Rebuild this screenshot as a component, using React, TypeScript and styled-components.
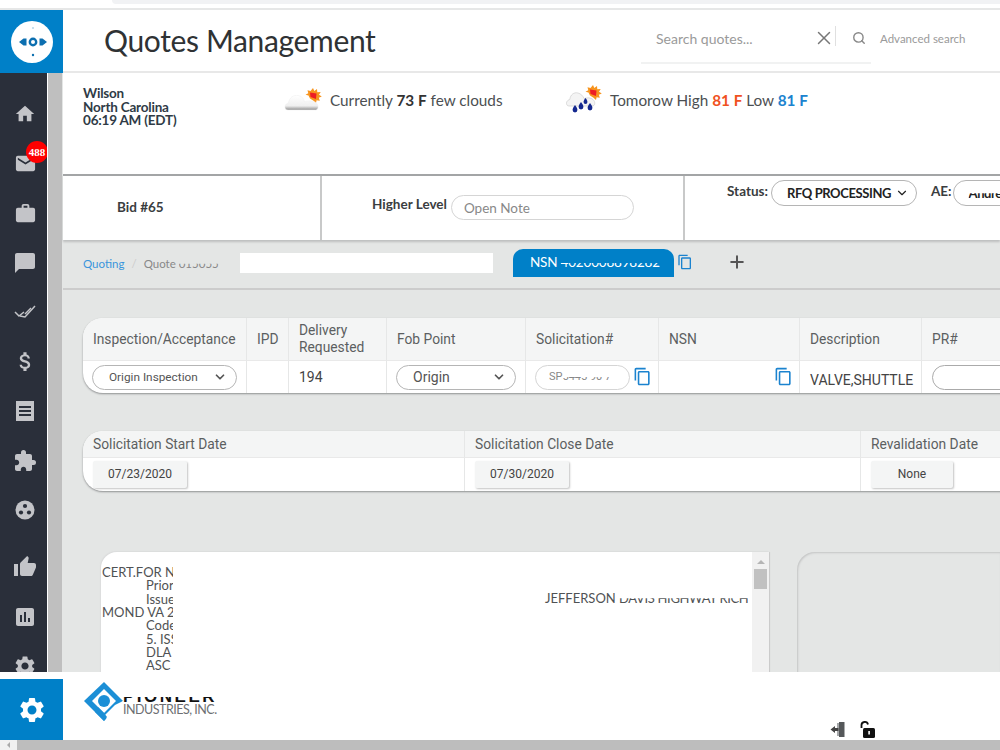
import React from "react";
import styled, { createGlobalStyle } from "styled-components";
import {
  MdHome,
  MdEmail,
  MdWork,
  MdChatBubble,
  MdAttachMoney,
  MdExtension,
  MdThumbUp,
  MdAssessment,
  MdSettings,
  MdContentCopy,
} from "react-icons/md";
import { FiX, FiPlus, FiChevronDown, FiSearch } from "react-icons/fi";

const Global = createGlobalStyle`
  html, body { margin: 0; padding: 0; background: #fff; }
  body { width: 1000px; height: 750px; overflow: hidden; font-family: "Lato", "Open Sans", sans-serif; color: #333; }
  * { box-sizing: border-box; }
`;

const Page = styled.div`
  width: 1000px;
  height: 750px;
  display: flex;
  flex-direction: column;
  overflow: hidden;
  background: #fff;
`;

const TopStrip = styled.div`
  height: 10px;
  flex: none;
  background: #fff;
  border-bottom: 2px solid #e6e7e7;
  padding-left: 112px;
`;

const TopTab = styled.div`
  height: 4px;
  background: #f1f2f4;
  border-bottom-left-radius: 6px;
`;

const Body = styled.div`
  height: 662px;
  flex: none;
  display: flex;
  overflow: hidden;
`;

const Sidebar = styled.aside`
  width: 63px;
  flex: none;
  display: flex;
  flex-direction: column;
`;

const LogoBlock = styled.div`
  height: 63px;
  flex: none;
  background: #0080c8;
  display: flex;
  align-items: center;
  justify-content: center;
`;

const SideBody = styled.div`
  flex: 1;
  display: flex;
  min-height: 0;
`;

const Rail = styled.nav`
  width: 47px;
  flex: none;
  background: #2a2f3a;
  display: flex;
  flex-direction: column;
  padding-top: 16.25px;
  overflow: hidden;
`;

const RailGutter = styled.div`
  width: 16px;
  flex: none;
  border-left: 1px solid #fff;
  background: #bfbfbf;
  border-right: 1px solid #e4e6e5;
`;

const RailItem = styled.div`
  position: relative;
  flex: none;
  width: 50px;
  height: 49.5px;
  display: flex;
  align-items: center;
  justify-content: center;
  color: #c3c4c8;
`;

const RailItemGap = styled(RailItem)`
  margin-top: 7.5px;
`;

const Badge = styled.span`
  position: absolute;
  left: 26px;
  top: 2px;
  width: 22px;
  height: 22px;
  border-radius: 50%;
  background: #ff0000;
  color: #fff;
  font: bold 11px/22px "Liberation Serif", serif;
  text-align: center;
`;

const Content = styled.main`
  flex: 1;
  min-width: 0;
  display: flex;
  flex-direction: column;
  background: #e4e6e5;
`;

const Header = styled.header`
  height: 63px;
  flex: none;
  background: #fff;
  display: flex;
  align-items: center;
  padding-left: 41px;
  border-bottom: 2px solid #e8e8e8;
`;

const Title = styled.h1`
  margin: 0 0 2px;
  width: 537px;
  flex: none;
  font-size: 30px;
  line-height: 40px;
  font-weight: 400;
  color: #2f3234;
  letter-spacing: -0.35px;
  white-space: nowrap;
`;

const SearchBox = styled.div`
  width: 230px;
  height: 47px;
  flex: none;
  margin-bottom: 1px;
  display: flex;
  align-items: center;
  border-bottom: 2px solid #f1f2f2;
  padding: 0 0 2px 15px;
  white-space: nowrap;
`;

const SearchText = styled.span`
  font-size: 14px;
  color: #9a9a9a;
  width: 157px;
  flex: none;
`;

const SearchIcon = styled.span<{ $color: string }>`
  display: flex;
  flex: none;
  color: ${(p) => p.$color};
`;

const SearchDivider = styled.span`
  width: 1px;
  height: 20px;
  flex: none;
  background: #e0e0e0;
  margin: 0 16px 4px 0;
`;

const Advanced = styled.span`
  font-size: 11.5px;
  color: #9a9a9a;
  margin-left: 14px;
  flex: none;
`;

const InfoRow = styled.section`
  height: 101px;
  flex: none;
  background: #fff;
  display: flex;
  align-items: flex-start;
  padding: 14px 0 0 20px;
`;

const Place = styled.div`
  width: 202px;
  flex: none;
  font-size: 13.5px;
  line-height: 13.5px;
  font-weight: 700;
  color: #2f3b46;
  letter-spacing: -0.2px;
`;

const Weather = styled.div<{ $w: number }>`
  width: ${(p) => p.$w}px;
  flex: none;
  display: flex;
  align-items: center;
  gap: 8px;
  font-size: 15.3px;
  color: #4c4f52;
  height: 30px;
  margin-top: -2px;
  white-space: nowrap;
`;

const Hot = styled.b`
  color: #f0521e;
`;
const Cool = styled.b`
  color: #1b83cf;
`;
const Strong = styled.b`
  color: #333;
`;

const BidRow = styled.section`
  height: 66px;
  flex: none;
  background: #fff;
  display: flex;
  border-top: 2px solid #a3a5a6;
  box-shadow: 0 2px 2px #bdbfbf;
  position: relative;
`;

const BidCell = styled.div<{ $w: number }>`
  width: ${(p) => p.$w}px;
  flex: none;
  border-right: 2px solid #c8c9c9;
  display: flex;
  align-items: center;
  font-size: 13.5px;
  font-weight: 700;
  color: #3a3d40;
`;

const BidLabel = styled.span`
  margin: 0 0 2px 54px;
`;

const LevelCell = styled(BidCell)`
  padding: 0 0 0 50px;
  gap: 4px;
`;

const LevelLabel = styled.span`
  margin-bottom: 8px;
`;

const NoteInput = styled.div`
  width: 183px;
  height: 25px;
  margin-bottom: 1px;
  border: 1px solid #d5d5d5;
  border-radius: 13px;
  font-size: 13.5px;
  font-weight: 400;
  color: #888;
  padding: 3px 12px;
  line-height: 18px;
`;

const StatusCell = styled.div`
  flex: 1;
  min-width: 0;
  display: flex;
  align-items: flex-start;
  padding: 4px 0 0 42px;
  font-size: 13.5px;
  font-weight: 700;
  color: #3a3d40;
  overflow: hidden;
  white-space: nowrap;
`;

const StatusLabel = styled.span`
  margin-top: 3px;
`;

const AeLabel = styled(StatusLabel)`
  margin-left: 14px;
`;

const Pill = styled.div<{ $w: number; $ml: number }>`
  width: ${(p) => p.$w}px;
  flex: none;
  height: 26px;
  margin-left: ${(p) => p.$ml}px;
  border: 1px solid #b5b5b5;
  border-radius: 13px;
  display: flex;
  align-items: center;
  padding-left: 15px;
  gap: 4px;
  font-size: 13px;
  letter-spacing: -0.4px;
  color: #222;
`;

const Crumbs = styled.section`
  height: 50px;
  flex: none;
  display: flex;
  align-items: flex-start;
  padding-left: 20px;
  border-bottom: 2px solid #ccc;
`;

const CrumbText = styled.div`
  width: 157px;
  flex: none;
  margin-top: 16px;
  font: 11.5px/15px "Lato", sans-serif;
  color: #888;
  white-space: nowrap;
`;

const CrumbLink = styled.span`
  color: #3a95dc;
`;

const CrumbSep = styled.span`
  color: #ccc;
  margin: 0 7px;
`;

const Halved = styled.span`
  display: inline-block;
  clip-path: inset(52% 0 0 0);
`;

const WhiteBar = styled.div`
  width: 253px;
  height: 20px;
  flex: none;
  margin-top: 13px;
  background: #fff;
`;

const NsnTab = styled.div`
  width: 161px;
  height: 28px;
  flex: none;
  margin: 9px 0 0 20px;
  background: #0080c8;
  border-radius: 10px 10px 0 0;
  color: #fff;
  font-size: 13.5px;
  letter-spacing: -0.2px;
  line-height: 27px;
  padding-left: 17px;
  white-space: nowrap;
`;

const TabCopy = styled.span`
  margin: 14px 0 0 3px;
  color: #1b83cf;
  display: flex;
`;

const TabAdd = styled.span`
  margin: 12px 0 0 34px;
  color: #555;
  display: flex;
`;

const Workspace = styled.section`
  flex: 1;
  min-height: 0;
  display: flex;
  flex-direction: column;
  padding: 28px 0 0 20px;
  overflow: hidden;
`;

const Table = styled.div<{ $cols: string; $head: number; $mb: number }>`
  width: 980px;
  flex: none;
  display: grid;
  grid-template-columns: ${(p) => p.$cols};
  grid-template-rows: ${(p) => p.$head}px auto;
  margin-bottom: ${(p) => p.$mb}px;
  border-radius: 20px 0 0 20px;
  overflow: hidden;
  background: #fff;
  box-shadow: 0 1px 2px #8f9192;
  font-family: "Roboto", sans-serif;
`;

const HeadCell = styled.div`
  background: #f4f5f5;
  color: #5c5f61;
  font-size: 13.8px;
  line-height: 17px;
  display: flex;
  align-items: center;
  padding-left: 10px;
  border-right: 1px solid #e6e7e7;
  border-bottom: 1px solid #e9e9e9;
  white-space: nowrap;
`;

const BodyCell = styled.div<{ $h: number }>`
  height: ${(p) => p.$h}px;
  color: #444;
  font-size: 14px;
  display: flex;
  align-items: center;
  padding-left: 10px;
  border-right: 1px solid #e6e7e7;
  white-space: nowrap;
  overflow: hidden;
  position: relative;
`;

const SelectPill = styled.div<{ $w: number; $fs: number; $pl: number }>`
  width: ${(p) => p.$w}px;
  height: 25px;
  flex: none;
  margin-left: -1px;
  border: 1px solid #b5b5b5;
  border-radius: 13px;
  display: flex;
  align-items: center;
  justify-content: space-between;
  padding: 0 9px 0 ${(p) => p.$pl}px;
  font-size: ${(p) => p.$fs}px;
  color: #555;
`;

const SolInput = styled.div`
  width: 95px;
  height: 25px;
  flex: none;
  margin-left: -1px;
  border: 1px solid #d5d5d5;
  border-radius: 13px;
  padding-left: 13px;
  font-size: 11px;
  line-height: 22px;
  color: #888;
`;

const CopyBtn = styled.span`
  display: flex;
  color: #1b83cf;
  position: absolute;
  top: 6px;
  right: 6px;
`;

const DescText = styled.span`
  padding-top: 6px;
`;

const PrInput = styled.div`
  width: 90px;
  height: 25px;
  flex: none;
  border: 1px solid #aaa;
  border-radius: 13px;
`;

const DateChip = styled.div<{ $w: number }>`
  width: ${(p) => p.$w}px;
  height: 27px;
  flex: none;
  background: #f4f5f5;
  border-radius: 2px;
  box-shadow: 1px 1px 2px #c4c4c4;
  font-size: 12px;
  color: #444;
  text-align: center;
  line-height: 27px;
`;

const Panels = styled.div`
  flex: 1;
  min-height: 0;
  display: flex;
  padding: 61px 0 0 18px;
`;

const NotePanel = styled.div`
  width: 668px;
  height: 130px;
  flex: none;
  background: #fff;
  border-radius: 16px 0 0 0;
  box-shadow: -1px -1px 1px #dcdddd, 1px 0 1px #c8c8c8;
  display: flex;
  position: relative;
  overflow: hidden;
`;

const NoteClip = styled.div`
  width: 72px;
  flex: none;
  overflow: hidden;
  padding-top: 14px;
  padding-left: 1px;
  font-size: 13px;
  line-height: 13.35px;
  color: #4f5254;
  white-space: nowrap;
`;

const NoteLine = styled.div<{ $indent?: boolean }>`
  padding-left: ${(p) => (p.$indent ? 44 : 0)}px;
`;

const NoteRight = styled.div`
  flex: 1;
  padding: 38px 0 0 372px;
  font-size: 13px;
  line-height: 16px;
  color: #4f5254;
  white-space: nowrap;
  overflow: hidden;
`;

const NoteRedacted = styled(Halved)`
  letter-spacing: -0.35px;
`;

const ScrollTrack = styled.div`
  width: 17px;
  flex: none;
  background: #f1f1f1;
  display: flex;
  flex-direction: column;
  align-items: center;
  padding-top: 8px;
`;

const ScrollArrow = styled.span`
  width: 0;
  height: 0;
  border: 4px solid transparent;
  border-top: 0;
  border-bottom: 4px solid #b5b5b5;
`;

const ScrollThumb = styled.div`
  width: 13px;
  height: 20px;
  margin-top: 5px;
  background: #c1c1c1;
`;

const GhostPanel = styled.div`
  width: 203px;
  height: 130px;
  flex: none;
  margin-left: 28px;
  border-radius: 18px 0 0 0;
  background: #e4e6e5;
  box-shadow: inset 1px 1px 2px #c4c5c5;
`;

const Footer = styled.footer`
  height: 68px;
  flex: none;
  background: #fff;
  display: flex;
  align-items: flex-end;
`;

const GearBlock = styled.div`
  width: 63px;
  height: 61px;
  flex: none;
  background: #0080c8;
  color: #fff;
  display: flex;
  align-items: center;
  justify-content: center;
`;

const Brand = styled.div`
  width: 763px;
  height: 68px;
  flex: none;
  padding: 10px 0 0 21px;
  display: flex;
`;

const BrandText = styled.div`
  margin: 9px 0 0 -1px;
  display: flex;
  flex-direction: column;
  font-size: 12.5px;
  line-height: 13px;
  letter-spacing: -0.5px;
  color: #6d6f72;
  white-space: nowrap;
`;

const BrandName = styled.span`
  display: inline-block;
  font: 900 17px/12px "Liberation Sans", sans-serif;
  color: #111;
  letter-spacing: 2.5px;
  clip-path: inset(50% 0 0 0);
`;

const FooterIcons = styled.div`
  display: flex;
  align-items: center;
  gap: 14px;
  margin-bottom: 2px;
  margin-left: 4px;
`;

const BottomBar = styled.div`
  height: 10px;
  flex: none;
  background: #bdbdbd;
  display: flex;
`;

const BottomCap = styled.div`
  width: 17px;
  height: 10px;
  flex: none;
  background: #f1f1f1;
  display: flex;
  align-items: center;
  justify-content: center;
`;

const CapArrow = styled.span`
  width: 0;
  height: 0;
  border: 3px solid transparent;
  border-left: 0;
  border-right: 3px solid #aaa;
`;

const LogoMark = () => (
  <svg width="42" height="42" viewBox="0 0 42 42">
    <circle cx="21" cy="21" r="21" fill="#fff" />
    <circle cx="22" cy="21" r="3.2" fill="none" stroke="#0c6fb0" strokeWidth="2.4" />
    <path d="M8 21l4.5-3.5h3v7h-3z" fill="#0c6fb0" />
    <path d="M36 21l-4.5-3.5h-3v7h3z" fill="#0c6fb0" />
    <circle cx="22" cy="7" r="0.7" fill="#6ba8d0" />
    <circle cx="22" cy="34" r="1.2" fill="#0c6fb0" />
  </svg>
);

const DoubleCheck = () => (
  <svg width="22" height="14" viewBox="0 0 22 14" fill="none" stroke="#c3c4c8" strokeWidth="1.5">
    <path d="M1 7l4 4 5-4" />
    <path d="M6 11l5 1L21 1" />
    <path d="M11 9l6-6" />
  </svg>
);

const Ledger = () => (
  <svg width="18" height="20" viewBox="0 0 18 20">
    <rect width="18" height="20" fill="#c3c4c8" />
    <path d="M3 5h12v2H3zM3 9h12v2H3zM3 13h12v2H3z" fill="#2a2f3a" />
  </svg>
);

const Bowl = () => (
  <svg width="20" height="20" viewBox="0 0 20 20">
    <circle cx="10" cy="10" r="9.5" fill="#c3c4c8" />
    <circle cx="10" cy="6" r="2.1" fill="#2a2f3a" />
    <circle cx="6" cy="12.5" r="2.1" fill="#2a2f3a" />
    <circle cx="14" cy="12.5" r="2.1" fill="#2a2f3a" />
  </svg>
);

const Sun = ({ x, y }: { x: number; y: number }) => (
  <g transform={`translate(${x} ${y})`}>
    <path
      d="M8 0l1.300 3 2.700-2 .3 3.300 3.400-.3-1.700 2.800 2.800 1.700-3 1.200 1 3-3.200-.5L11 15 8.500 12.700 5 10.500 3.500 7.500.5 6.800l2.800-1.500-.8-3 3 .6z"
      fill="#f7941d"
    />
    <path d="M5 4.500l6.500 1L11 11 5.500 9z" fill="#ed1c24" />
  </g>
);

const Cloud = () => (
  <svg width="38" height="24" viewBox="0 0 38 24" style={{ marginLeft: -1 }}>
    <defs>
      <linearGradient id="cl" x1="0" y1="0" x2="0" y2="1">
        <stop offset="0" stopColor="#fff" />
        <stop offset="0.72" stopColor="#efefef" />
        <stop offset="1" stopColor="#8f8f8f" />
      </linearGradient>
    </defs>
    <Sun x={21} y={0} />
    <path
      d="M4 22c-4 0-4.200-6 .4-7 .8-5 5-8.500 10-7.500 3.500.8 5.500 3 6 6 4-1 10-1 12.500 2 2 2.500 1.500 6.500-1.500 6.500z"
      fill="url(#cl)"
      stroke="#ececec"
      strokeWidth="0.5"
    />
  </svg>
);

const Drop = ({ x, y, s }: { x: number; y: number; s: number }) => (
  <path
    transform={`translate(${x} ${y}) scale(${s})`}
    d="M0-5C2-2.500 2.400-1 2.400 0a2.400 2.400 0 0 1-4.800 0C-2.400-1-2-2.500 0-5z"
    fill="#14288f"
  />
);

const RainCloud = () => (
  <svg width="36" height="30" viewBox="0 0 36 30">
    <Sun x={19} y={0} />
    <path
      d="M3 21c-3.500 0-3.500-5.500.8-6.500.6-5 4.200-7.500 8.200-6.500 3 .8 5 3 6 5.500 3-1 7-1 9 1 2.500 2.500 2.500 6.500-1 6.500z"
      fill="#f4f4f4"
      stroke="#c8c8c8"
      strokeWidth="0.6"
    />
    <Drop x={9} y={25} s={1} />
    <Drop x={15} y={22} s={1} />
    <Drop x={19.5} y={17} s={0.8} />
    <Drop x={24} y={23} s={1} />
  </svg>
);

const PioneerMark = () => (
  <svg width="40" height="40" viewBox="0 0 40 40">
    <path d="M20 0L39 19 20 39 0 19z" fill="#1c8fd6" />
    <path d="M20 7L32 19 20 31 8 19z" fill="#fff" />
    <circle cx="20" cy="19" r="6" fill="#1c8fd6" />
    <path d="M39 19l1 1-16 18-4-4 11-11z" fill="#fff" />
    <path d="M14 25l6 6 3 4-3 4-9-9z" fill="#1c8fd6" />
  </svg>
);

const DoorIcon = () => (
  <svg width="16" height="17" viewBox="0 0 16 17">
    <path d="M9 1h5.500v15H9z" fill="#55585a" />
    <path d="M7 2h2v13H7z" fill="#a5a7a9" />
    <path d="M0.500 8.500L5 5v2h3.500v3H5v2z" fill="#444" />
  </svg>
);

const LockIcon = () => (
  <svg width="16" height="17" viewBox="0 0 16 17">
    <path d="M1.500 7V4.500a3.300 3.300 0 0 1 6.500-1" fill="none" stroke="#111" strokeWidth="1.8" />
    <rect x="3" y="7" width="12" height="10" rx="1.500" fill="#111" />
    <rect x="8.300" y="10" width="1.600" height="3.500" fill="#fff" />
  </svg>
);

const cols1 = "164px 42px 98px 139px 133px 141px 122px 141px";
const cols2 = "382px 396px 202px";

export default function App() {
  return (
    <Page>
      <Global />
      <TopStrip>
        <TopTab />
      </TopStrip>
      <Body>
        <Sidebar>
          <LogoBlock>
            <LogoMark />
          </LogoBlock>
          <SideBody>
            <Rail>
              <RailItem><MdHome size={22} /></RailItem>
              <RailItem>
                <MdEmail size={23} />
                <Badge>488</Badge>
              </RailItem>
              <RailItem><MdWork size={23} /></RailItem>
              <RailItem><MdChatBubble size={24} /></RailItem>
              <RailItem><DoubleCheck /></RailItem>
              <RailItem><MdAttachMoney size={25} /></RailItem>
              <RailItem><Ledger /></RailItem>
              <RailItem><MdExtension size={24} /></RailItem>
              <RailItem><Bowl /></RailItem>
              <RailItemGap><MdThumbUp size={24} /></RailItemGap>
              <RailItem><MdAssessment size={24} /></RailItem>
              <RailItem><MdSettings size={24} /></RailItem>
            </Rail>
            <RailGutter />
          </SideBody>
        </Sidebar>
        <Content>
          <Header>
            <Title>Quotes Management</Title>
            <SearchBox>
              <SearchText>Search quotes...</SearchText>
              <SearchIcon $color="#777"><FiX size={22} strokeWidth={1.6} /></SearchIcon>
              <SearchDivider />
              <SearchIcon $color="#888"><FiSearch size={14} strokeWidth={2.4} /></SearchIcon>
              <Advanced>Advanced search</Advanced>
            </SearchBox>
          </Header>
          <InfoRow>
            <Place>
              Wilson
              <br />
              North Carolina
              <br />
              06:19 AM (EDT)
            </Place>
            <Weather $w={281}>
              <Cloud />
              <span>
                Currently <Strong>73 F</Strong> few clouds
              </span>
            </Weather>
            <Weather $w={300}>
              <RainCloud />
              <span>
                Tomorow High <Hot>81 F</Hot> Low <Cool>81 F</Cool>
              </span>
            </Weather>
          </InfoRow>
          <BidRow>
            <BidCell $w={259}>
              <BidLabel>Bid #65</BidLabel>
            </BidCell>
            <LevelCell $w={363}>
              <LevelLabel>Higher Level</LevelLabel>
              <NoteInput>Open Note</NoteInput>
            </LevelCell>
            <StatusCell>
              <StatusLabel>Status:</StatusLabel>
              <Pill $w={146} $ml={3}>
                RFQ PROCESSING <FiChevronDown size={14} />
              </Pill>
              <AeLabel>AE:</AeLabel>
              <Pill $w={100} $ml={1}>
                <Halved>Andrew</Halved>
              </Pill>
            </StatusCell>
          </BidRow>
          <Crumbs>
            <CrumbText>
              <CrumbLink>Quoting</CrumbLink>
              <CrumbSep>/</CrumbSep>
              Quote <Halved>015055</Halved>
            </CrumbText>
            <WhiteBar />
            <NsnTab>
              NSN <Halved>4020008898282</Halved>
            </NsnTab>
            <TabCopy><MdContentCopy size={16} /></TabCopy>
            <TabAdd><FiPlus size={20} strokeWidth={2.4} /></TabAdd>
          </Crumbs>
          <Workspace>
            <Table $cols={cols1} $head={43} $mb={38}>
              <HeadCell>Inspection/Acceptance</HeadCell>
              <HeadCell>IPD</HeadCell>
              <HeadCell>
                Delivery
                <br />
                Requested
              </HeadCell>
              <HeadCell>Fob Point</HeadCell>
              <HeadCell>Solicitation#</HeadCell>
              <HeadCell>NSN</HeadCell>
              <HeadCell>Description</HeadCell>
              <HeadCell>PR#</HeadCell>
              <BodyCell $h={32}>
                <SelectPill $w={145} $fs={11.8} $pl={16}>
                  Origin Inspection <FiChevronDown size={14} strokeWidth={3} />
                </SelectPill>
              </BodyCell>
              <BodyCell $h={32} />
              <BodyCell $h={32}>194</BodyCell>
              <BodyCell $h={32}>
                <SelectPill $w={120} $fs={14} $pl={16}>
                  Origin <FiChevronDown size={14} strokeWidth={3} />
                </SelectPill>
              </BodyCell>
              <BodyCell $h={32}>
                <SolInput>
                  SP<Halved>5445 90 7</Halved>
                </SolInput>
                <CopyBtn><MdContentCopy size={19} /></CopyBtn>
              </BodyCell>
              <BodyCell $h={32}>
                <CopyBtn><MdContentCopy size={19} /></CopyBtn>
              </BodyCell>
              <BodyCell $h={32}>
                <DescText>VALVE,SHUTTLE</DescText>
              </BodyCell>
              <BodyCell $h={32}>
                <PrInput />
              </BodyCell>
            </Table>
            <Table $cols={cols2} $head={27} $mb={0}>
              <HeadCell>Solicitation Start Date</HeadCell>
              <HeadCell>Solicitation Close Date</HeadCell>
              <HeadCell>Revalidation Date</HeadCell>
              <BodyCell $h={33}><DateChip $w={94}>07/23/2020</DateChip></BodyCell>
              <BodyCell $h={33}><DateChip $w={94}>07/30/2020</DateChip></BodyCell>
              <BodyCell $h={33}><DateChip $w={82}>None</DateChip></BodyCell>
            </Table>
            <Panels>
              <NotePanel>
                <NoteClip>
                  <NoteLine>CERT.FOR NATIONAL</NoteLine>
                  <NoteLine $indent>Priority</NoteLine>
                  <NoteLine $indent>Issued</NoteLine>
                  <NoteLine>MOND VA 23297</NoteLine>
                  <NoteLine $indent>Code</NoteLine>
                  <NoteLine $indent>5. ISSUED</NoteLine>
                  <NoteLine $indent>DLA</NoteLine>
                  <NoteLine $indent>ASC</NoteLine>
                </NoteClip>
                <NoteRight>
                  JEFFERSON <NoteRedacted>DAVIS HIGHWAY RICH</NoteRedacted>
                </NoteRight>
                <ScrollTrack>
                  <ScrollArrow />
                  <ScrollThumb />
                </ScrollTrack>
              </NotePanel>
              <GhostPanel />
            </Panels>
          </Workspace>
        </Content>
      </Body>
      <Footer>
        <GearBlock><MdSettings size={30} /></GearBlock>
        <Brand>
          <PioneerMark />
          <BrandText>
            <BrandName>PIONEER</BrandName>
            INDUSTRIES, INC.
          </BrandText>
        </Brand>
        <FooterIcons>
          <DoorIcon />
          <LockIcon />
        </FooterIcons>
      </Footer>
      <BottomBar>
        <BottomCap><CapArrow /></BottomCap>
      </BottomBar>
    </Page>
  );
}
